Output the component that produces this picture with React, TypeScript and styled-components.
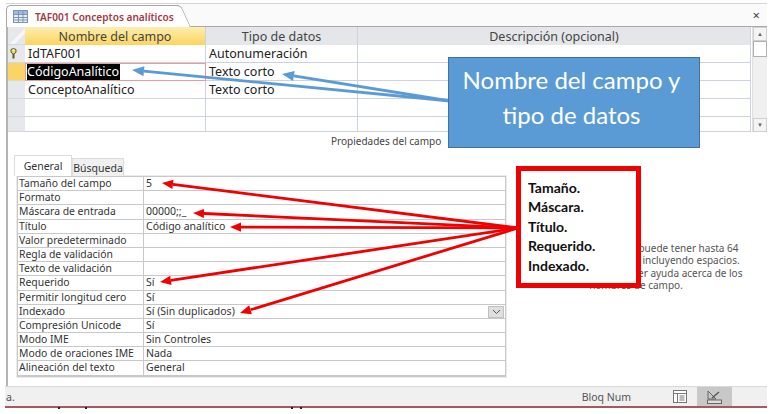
import React from "react";
import styled, { createGlobalStyle } from "styled-components";

const GlobalStyle = createGlobalStyle`
  html, body {
    margin: 0;
    padding: 0;
    background: #fff;
  }
`;

const Page = styled.div`
  position: relative;
  width: 774px;
  height: 414px;
  overflow: hidden;
  background: #fff;
  font-family: "Noto Sans", "Open Sans", sans-serif;
  color: #333;
`;

const TabStrip = styled.div`
  display: flex;
  justify-content: space-between;
  align-items: flex-end;
  height: 22px;
  margin: 3px 7px 0 6px;
  border-top: 1px solid #d6d6d6;
  border-bottom: 1px solid #a8a8a8;
  background: #fafafa;
`;

const Tab = styled.div`
  position: relative;
  display: flex;
  align-items: center;
  gap: 7px;
  width: 173px;
  height: 22px;
  margin-bottom: -1px;
  padding-left: 6px;
  background: #fff;
  border: 1px solid #a8a8a8;
  border-bottom: none;
  border-right: none;
  border-radius: 5px 0 0 0;
  box-sizing: border-box;

  &::after {
    content: "";
    position: absolute;
    top: -1px;
    right: -7px;
    width: 14px;
    height: 22px;
    background: #fff;
    border-right: 1px solid #a8a8a8;
    border-top: 1px solid #a8a8a8;
    border-radius: 0 5px 0 0;
    transform: skewX(24deg);
    box-sizing: border-box;
  }
`;

const TabTitle = styled.span`
  position: relative;
  z-index: 1;
  font-family: "Noto Sans", sans-serif;
  font-size: 10.1px;
  font-weight: 600;
  color: #a33a3f;
  white-space: nowrap;
`;

const CloseMark = styled.span`
  align-self: center;
  margin-right: 7px;
  font-size: 13px;
  line-height: 1;
  color: #444;
`;

const Body = styled.div`
  height: 359px;
  margin-left: 6px;
  margin-right: 7px;
  border-left: 2px solid #b4b4b4;
`;

const DesignArea = styled.div`
  display: flex;
  height: 105px;
`;

const DesignTable = styled.div`
  display: grid;
  grid-template-columns: 17px 181px 152px 393px;
  grid-template-rows: 18px 18px 18px 18px 18px 15px;
  width: 743px;
`;

const Selector = styled.div<{ $active?: boolean }>`
  background: ${(p) => (p.$active ? "#fbd467" : "#e6e8eb")};
  border-bottom: 1px solid #d5d8dd;
  display: flex;
  align-items: center;
  padding-left: 2px;
  box-sizing: border-box;
`;

const CornerSelector = styled(Selector)`
  background: linear-gradient(135deg, #e6e8eb 0 55%, #f6f7f8 55% 70%, #e6e8eb 70%);
`;

const HeaderCell = styled.div<{ $active?: boolean }>`
  display: flex;
  align-items: center;
  justify-content: center;
  background: ${(p) =>
    p.$active ? "linear-gradient(#fdeeb0, #fcd45f)" : "#e4e6e9"};
  border-right: 1px solid #cfd3d9;
  font-size: 12.5px;
  color: #444;
  box-sizing: border-box;
`;

const FieldCell = styled.div<{ $current?: boolean; $open?: boolean }>`
  display: flex;
  align-items: center;
  padding-left: 3px;
  font-size: 12.5px;
  color: #222;
  background: #fff;
  border-right: 1px solid #ccd2e0;
  border-bottom: ${(p) => (p.$open ? "none" : "1px solid #ccd2e0")};
  outline: ${(p) => (p.$current ? "1px solid #ec9a9a" : "none")};
  outline-offset: -1px;
  box-sizing: border-box;
`;

const Selected = styled.span`
  background: #000;
  color: #fff;
  padding: 0 1px 0 0;
  margin-left: -1px;
`;

const ScrollBar = styled.div`
  display: flex;
  flex-direction: column;
  width: 14px;
  margin-left: 1px;
  background: #f0f0f0;
  border-left: 1px solid #e0e0e0;
`;

const ScrollButton = styled.div`
  display: flex;
  align-items: center;
  justify-content: center;
  height: 14px;
  font-size: 6px;
  color: #666;
  background: #f4f4f4;
  border: 1px solid #d0d0d0;
  box-sizing: border-box;
`;

const ScrollThumb = styled.div`
  height: 16px;
  background: #fff;
  border: 1px solid #b0b0b0;
  box-sizing: border-box;
`;

const ScrollTrack = styled.div`
  flex: 1;
`;

const SectionLabel = styled.div`
  height: 23px;
  padding-left: 323px;
  font-size: 10px;
  line-height: 19px;
  color: #444;
`;

const Lower = styled.div`
  display: flex;
  height: 226px;
`;

const PropertyPanel = styled.div`
  width: 500px;
  margin-left: 6px;
`;

const PropertyTabs = styled.div`
  display: flex;
  align-items: flex-end;
  height: 21px;
`;

const PropertyTab = styled.div<{ $active?: boolean }>`
  display: flex;
  align-items: center;
  justify-content: center;
  width: ${(p) => (p.$active ? "58px" : "52px")};
  height: ${(p) => (p.$active ? "21px" : "18px")};
  background: ${(p) => (p.$active ? "#fff" : "#f0f0f0")};
  border: 1px solid #dcdcdc;
  border-bottom: none;
  box-sizing: border-box;
  font-size: 10.5px;
  color: #333;
`;

const PropertyTable = styled.div`
  display: grid;
  grid-template-columns: 126px 1fr;
  grid-auto-rows: 14.2px;
  width: 489px;
  margin-left: 3px;
  border: 1px solid #c8c8c8;
  box-shadow: 0 0 0 1px #ececec;
  box-sizing: border-box;
`;

const PropertyName = styled.div`
  font-size: 10.4px;
  line-height: 13px;
  padding-left: 1px;
  color: #333;
  white-space: nowrap;
  border-right: 1px solid #c8c8c8;
  border-bottom: 1px solid #c8c8c8;
  box-sizing: border-box;
`;

const PropertyValue = styled.div`
  position: relative;
  font-size: 10.5px;
  line-height: 13px;
  padding-left: 2px;
  color: #333;
  white-space: nowrap;
  border-bottom: 1px solid #c8c8c8;
  box-sizing: border-box;
`;

const DropButton = styled.div`
  position: absolute;
  top: 1px;
  right: 1px;
  display: flex;
  align-items: center;
  justify-content: center;
  width: 16px;
  height: 12px;
  background: #dfdfdf;
  border: 1px solid #c0c0c0;
  box-sizing: border-box;
`;

const HelpText = styled.div`
  width: 228px;
  margin: 87px 0 0 8px;
  font-size: 10px;
  line-height: 12.4px;
  color: #555;
  text-align: center;
`;

const StatusBar = styled.div`
  display: flex;
  align-items: center;
  justify-content: space-between;
  width: 762px;
  height: 22px;
  margin-left: 5px;
  background: #f0f0f0;
  border-top: 1px solid #d8d8d8;
  border-bottom: 2px solid #a5585f;
  box-sizing: border-box;
  font-size: 10.5px;
  color: #555;
`;

const StatusText = styled.span`
  padding-left: 1px;
`;

const StatusRight = styled.div`
  display: flex;
  align-items: center;
  height: 100%;
`;

const StatusItem = styled.span`
  margin-right: 31px;
`;

const ViewButton = styled.div<{ $active?: boolean }>`
  display: flex;
  align-items: center;
  justify-content: center;
  width: 35px;
  height: 100%;
  background: ${(p) => (p.$active ? "#c8c8c8" : "transparent")};
`;

const Overlay = styled.svg`
  position: absolute;
  inset: 0;
  pointer-events: none;
`;

const BlueCallout = styled.div`
  position: absolute;
  left: 448px;
  top: 57px;
  width: 252px;
  height: 91px;
  padding: 0 5px 12px 0;
  display: flex;
  flex-direction: column;
  align-items: center;
  justify-content: center;
  background: #5b9bd5;
  border: 1px solid #41719c;
  box-sizing: border-box;
  font-family: "Lato", "Open Sans", sans-serif;
  font-size: 24px;
  line-height: 35px;
  color: #fff;
`;

const RedCallout = styled.div`
  position: absolute;
  left: 516px;
  top: 166px;
  width: 125px;
  height: 122px;
  padding: 7px 0 0 7px;
  background: #fff;
  border: 5px solid #f00000;
  box-sizing: border-box;
  font-family: "Lato", "Open Sans", sans-serif;
  font-size: 14px;
  font-weight: 700;
  line-height: 19.4px;
  color: #111;
`;

const rows = [
  { name: "IdTAF001", type: "Autonumeración", key: true },
  { name: "CódigoAnalítico", type: "Texto corto", current: true },
  { name: "ConceptoAnalítico", type: "Texto corto" },
  { name: "", type: "" },
  { name: "", type: "" },
];

const properties: [string, string][] = [
  ["Tamaño del campo", "5"],
  ["Formato", ""],
  ["Máscara de entrada", "00000;;_"],
  ["Título", "Código analítico"],
  ["Valor predeterminado", ""],
  ["Regla de validación", ""],
  ["Texto de validación", ""],
  ["Requerido", "Sí"],
  ["Permitir longitud cero", "Sí"],
  ["Indexado", "Sí (Sin duplicados)"],
  ["Compresión Unicode", "Sí"],
  ["Modo IME", "Sin Controles"],
  ["Modo de oraciones IME", "Nada"],
  ["Alineación del texto", "General"],
];

function TableIcon() {
  return (
    <svg width="15" height="13" viewBox="0 0 15 13">
      <rect x="0.5" y="0.5" width="14" height="12" fill="#e6eef8" stroke="#7d94b5" />
      <rect x="1" y="1" width="13" height="3" fill="#9dbbe0" />
      <path d="M5.5 1v11M10 1v11M1 4.5h13M1 7.5h13M1 10h13" stroke="#7d94b5" fill="none" />
    </svg>
  );
}

function KeyIcon() {
  return (
    <svg width="7" height="11" viewBox="0 0 7 11">
      <path d="M1 1.5Q3.5-0.3 6 1.5V4Q5 6 3.5 6T1 4z" fill="#e0d860" stroke="#5d5a22" />
      <path d="M3.5 6v4.5" stroke="#5d5a22" strokeWidth="2" fill="none" />
      <rect x="2.5" y="1.6" width="2" height="1.3" fill="#fff" />
    </svg>
  );
}

function DatasheetIcon() {
  return (
    <svg width="14" height="13" viewBox="0 0 14 13">
      <rect x="0.5" y="0.5" width="13" height="12" fill="#fff" stroke="#777" />
      <path d="M0.5 3.5h13M4.5 3.5v9" stroke="#777" fill="none" />
      <path d="M6.5 6h5M6.5 8h5M6.5 10h5" stroke="#777" fill="none" />
    </svg>
  );
}

function DesignIcon() {
  return (
    <svg width="15" height="14" viewBox="0 0 15 14">
      <path d="M1 1v8h8z" fill="none" stroke="#666" />
      <path d="M5 8l7-6" stroke="#555" strokeWidth="1.4" fill="none" />
      <rect x="0.5" y="10" width="14" height="3.5" fill="#ddd" stroke="#666" />
    </svg>
  );
}

function Arrow({ x1, y1, x2, y2, color, width, head }: { x1: number; y1: number; x2: number; y2: number; color: string; width: number; head: number }) {
  const a = Math.atan2(y2 - y1, x2 - x1);
  const bx = x2 - Math.cos(a) * head;
  const by = y2 - Math.sin(a) * head;
  const hw = head * 0.42;
  const nx = -Math.sin(a) * hw;
  const ny = Math.cos(a) * hw;
  return (
    <g>
      <line x1={x1} y1={y1} x2={bx} y2={by} stroke={color} strokeWidth={width} />
      <polygon points={`${x2},${y2} ${bx + nx},${by + ny} ${bx - nx},${by - ny}`} fill={color} />
    </g>
  );
}

const blueArrows = [
  { x2: 132, y2: 70 },
  { x2: 282, y2: 74 },
];

const redArrows = [
  { x2: 162, y2: 183 },
  { x2: 193, y2: 213 },
  { x2: 230, y2: 227 },
  { x2: 160, y2: 282 },
  { x2: 240, y2: 313 },
];

// specks of the page behind the captured window
const specks = [58, 85, 291, 300];

export default function App() {
  return (
    <Page>
      <GlobalStyle />
      <TabStrip>
        <Tab>
          <TableIcon />
          <TabTitle>TAF001 Conceptos analíticos</TabTitle>
        </Tab>
        <CloseMark>×</CloseMark>
      </TabStrip>
      <Body>
        <DesignArea>
          <DesignTable>
            <CornerSelector />
            <HeaderCell $active>Nombre del campo</HeaderCell>
            <HeaderCell>Tipo de datos</HeaderCell>
            <HeaderCell>Descripción (opcional)</HeaderCell>
            {rows.map((row, i) => (
              <React.Fragment key={i}>
                <Selector $active={row.current}>{row.key && <KeyIcon />}</Selector>
                <FieldCell $current={row.current}>
                  {row.current ? <Selected>{row.name}</Selected> : row.name}
                </FieldCell>
                <FieldCell>{row.type}</FieldCell>
                <FieldCell />
              </React.Fragment>
            ))}
            <div />
            <FieldCell $open />
            <FieldCell $open />
            <div />
          </DesignTable>
          <ScrollBar>
            <ScrollButton>▲</ScrollButton>
            <ScrollThumb />
            <ScrollTrack />
            <ScrollButton>▼</ScrollButton>
          </ScrollBar>
        </DesignArea>
        <SectionLabel>Propiedades del campo</SectionLabel>
        <Lower>
          <PropertyPanel>
            <PropertyTabs>
              <PropertyTab $active>General</PropertyTab>
              <PropertyTab>Búsqueda</PropertyTab>
            </PropertyTabs>
            <PropertyTable>
              {properties.map(([name, value]) => (
                <React.Fragment key={name}>
                  <PropertyName>{name}</PropertyName>
                  <PropertyValue>
                    {value}
                    {name === "Indexado" && (
                      <DropButton>
                        <svg width="9" height="6" viewBox="0 0 9 6">
                          <path d="M1 1l3.5 3.5L8 1" stroke="#555" fill="none" />
                        </svg>
                      </DropButton>
                    )}
                  </PropertyValue>
                </React.Fragment>
              ))}
            </PropertyTable>
          </PropertyPanel>
          <HelpText>
            Un nombre de campo puede tener hasta 64 caracteres de longitud, incluyendo espacios.
            Presione F1 para obtener ayuda acerca de los nombres de campo.
          </HelpText>
        </Lower>
      </Body>
      <StatusBar>
        <StatusText>a.</StatusText>
        <StatusRight>
          <StatusItem>Bloq Num</StatusItem>
          <ViewButton>
            <DatasheetIcon />
          </ViewButton>
          <ViewButton $active>
            <DesignIcon />
          </ViewButton>
          <ViewButton />
        </StatusRight>
      </StatusBar>
      <Overlay width="774" height="414" viewBox="0 0 774 414">
        {blueArrows.map((a) => (
          <Arrow key={a.x2} x1={450} y1={101} x2={a.x2} y2={a.y2} color="#5b9bd5" width={2.8} head={12} />
        ))}
        {redArrows.map((a) => (
          <Arrow key={a.x2} x1={518} y1={228} x2={a.x2} y2={a.y2} color="#f00000" width={2.8} head={11} />
        ))}
        {specks.map((x) => (
          <rect key={x} x={x} y={407} width={2} height={2} fill="#222" />
        ))}
      </Overlay>
      <BlueCallout>
        <span>Nombre del campo y</span>
        <span>tipo de datos</span>
      </BlueCallout>
      <RedCallout>
        <div>Tamaño.</div>
        <div>Máscara.</div>
        <div>Título.</div>
        <div>Requerido.</div>
        <div>Indexado.</div>
      </RedCallout>
    </Page>
  );
}
